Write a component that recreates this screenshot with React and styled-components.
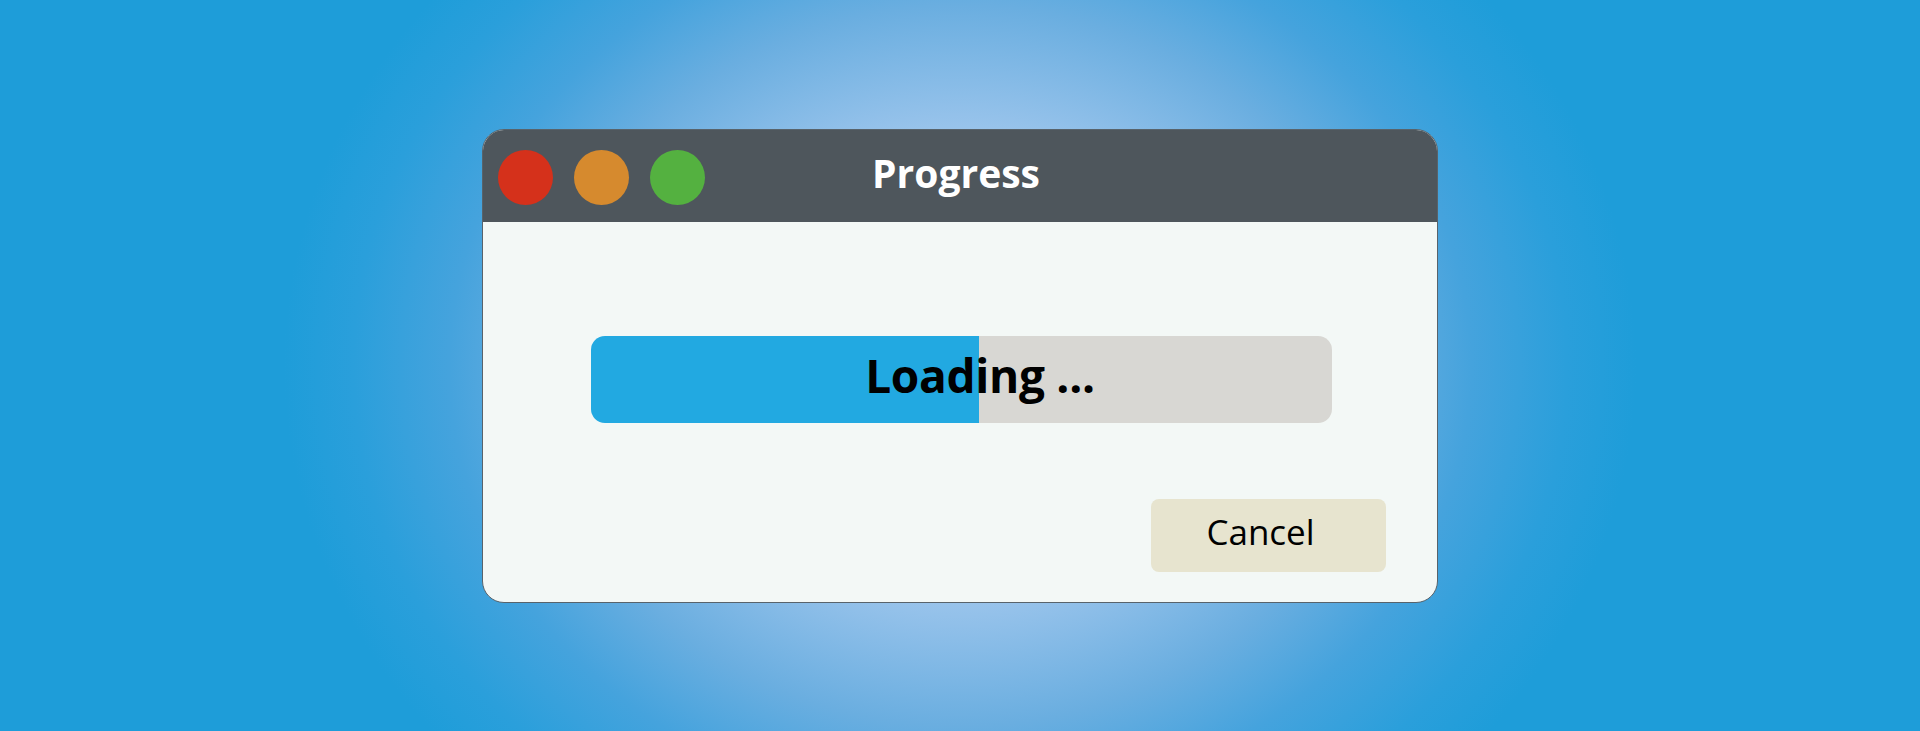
import React from "react";
import styled, { createGlobalStyle } from "styled-components";

const GlobalStyle = createGlobalStyle`
  html, body {
    margin: 0;
    padding: 0;
    height: 100%;
  }
  body {
    font-family: "Open Sans", "Noto Sans", "DejaVu Sans", sans-serif;
    overflow: hidden;
  }
`;

const Backdrop = styled.main`
  width: 100vw;
  height: 100vh;
  display: flex;
  align-items: center;
  justify-content: center;
  background: radial-gradient(
    ellipse 690px 600px at 50% 50%,
    #bcd8f3 0%,
    #9cc5ec 38%,
    #6aaee0 60%,
    #45a3dd 74%,
    #2a9fdb 88%,
    #1e9dd9 98%
  );
`;

const Window = styled.section`
  width: 956px;
  height: 474px;
  display: flex;
  flex-direction: column;
  border-radius: 22px;
  overflow: hidden;
  box-sizing: border-box;
  border: 1px solid #58636b;
  background: #f3f8f6;
`;

const TitleBar = styled.header`
  height: 92px;
  flex: none;
  display: grid;
  grid-template-columns: 1fr auto 1fr;
  align-items: center;
  background: #4e565c;
  padding: 0 15px;
`;

const Lights = styled.div`
  display: flex;
  gap: 21px;
  align-items: center;
`;

const Light = styled.span`
  width: 55px;
  height: 55px;
  border-radius: 50%;
  background: ${(p) => p.$color};
  margin-top: 3px;
`;

const Title = styled.h1`
  margin: 0 8px 6px 0;
  color: #ffffff;
  font-size: 39px;
  font-weight: 700;
  line-height: 1;
`;

const Body = styled.div`
  flex: 1;
  display: flex;
  flex-direction: column;
  padding: 114px 51px 30px 108px;
`;

const Bar = styled.div`
  width: 741px;
  height: 87px;
  border-radius: 14px;
  background: linear-gradient(
    to right,
    #22a9e1 0%,
    #22a9e1 ${(p) => p.$value}%,
    #d8d7d3 ${(p) => p.$value}%,
    #d8d7d3 100%
  );
  display: flex;
  align-items: center;
  justify-content: center;
`;

const BarLabel = styled.span`
  margin: 0 0 9px 37px;
  color: #000000;
  font-size: 46px;
  font-weight: 700;
  letter-spacing: -0.3px;
  line-height: 1;
`;

const Actions = styled.div`
  margin-top: auto;
  display: flex;
  justify-content: flex-end;
`;

const Button = styled.button`
  width: 235px;
  height: 73px;
  border: none;
  border-radius: 8px;
  background: #e7e4cf;
  color: #000000;
  font-family: "Open Sans", "Noto Sans", "DejaVu Sans", sans-serif;
  font-size: 35px;
  font-weight: 400;
  padding: 0 16px 8px 0;
  cursor: pointer;
`;

export default function App() {
  const progress = 52.36;
  return (
    <>
      <GlobalStyle />
      <Backdrop>
        <Window>
          <TitleBar>
            <Lights>
              <Light $color="#d5311b" />
              <Light $color="#d68a2e" />
              <Light $color="#54b140" />
            </Lights>
            <Title>Progress</Title>
            <div />
          </TitleBar>
          <Body>
            <Bar $value={progress}>
              <BarLabel>Loading ...</BarLabel>
            </Bar>
            <Actions>
              <Button type="button">Cancel</Button>
            </Actions>
          </Body>
        </Window>
      </Backdrop>
    </>
  );
}
